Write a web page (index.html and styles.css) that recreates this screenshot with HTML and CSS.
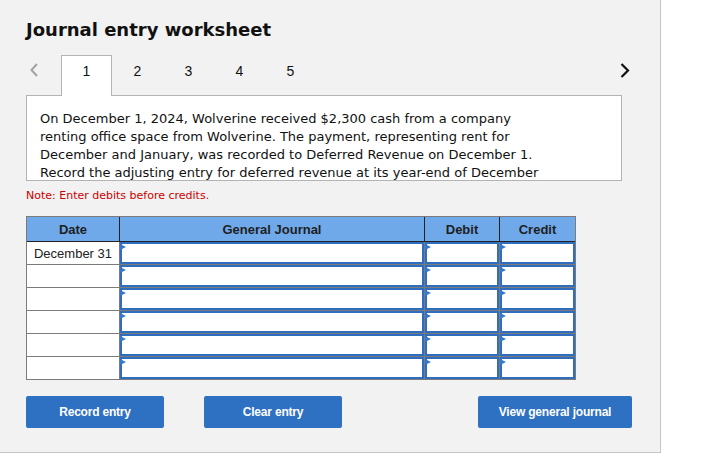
FILE: index.html
```html
<!DOCTYPE html>
<html lang="en">
<head>
<meta charset="utf-8">
<title>Journal entry worksheet</title>
<link rel="stylesheet" href="styles.css">
</head>
<body>
<div class="panel">
  <h1 class="title">Journal entry worksheet</h1>

  <div class="tabs">
    <span class="chev chev-left">
      <svg width="8" height="14" viewBox="0 0 8 14"><polyline points="7,1 1.5,7 7,13" fill="none" stroke="#a3a3a3" stroke-width="2"/></svg>
    </span>
    <span class="tab active">1</span>
    <span class="tab">2</span>
    <span class="tab">3</span>
    <span class="tab">4</span>
    <span class="tab">5</span>
    <span class="chev chev-right">
      <svg width="10" height="15" viewBox="0 0 10 15"><polyline points="1.5,1 8,7.5 1.5,14" fill="none" stroke="#111" stroke-width="2.2"/></svg>
    </span>
  </div>

  <div class="prompt">
    On December 1, 2024, Wolverine received $2,300 cash from a company<br>
    renting office space from Wolverine. The payment, representing rent for<br>
    December and January, was recorded to Deferred Revenue on December 1.<br>
    Record the adjusting entry for deferred revenue at its year-end of December
  </div>

  <p class="note">Note: Enter debits before credits.</p>

  <div class="jtable">
    <div class="th">Date</div>
    <div class="th">General Journal</div>
    <div class="th">Debit</div>
    <div class="th last">Credit</div>

    <div class="td date">December 31</div>
    <div class="td"><div class="inp"></div></div>
    <div class="td"><div class="inp"></div></div>
    <div class="td"><div class="inp"></div></div>

    <div class="td date"></div>
    <div class="td"><div class="inp"></div></div>
    <div class="td"><div class="inp"></div></div>
    <div class="td"><div class="inp"></div></div>

    <div class="td date"></div>
    <div class="td"><div class="inp"></div></div>
    <div class="td"><div class="inp"></div></div>
    <div class="td"><div class="inp"></div></div>

    <div class="td date"></div>
    <div class="td"><div class="inp"></div></div>
    <div class="td"><div class="inp"></div></div>
    <div class="td"><div class="inp"></div></div>

    <div class="td date"></div>
    <div class="td"><div class="inp"></div></div>
    <div class="td"><div class="inp"></div></div>
    <div class="td"><div class="inp"></div></div>

    <div class="td date"></div>
    <div class="td"><div class="inp"></div></div>
    <div class="td"><div class="inp"></div></div>
    <div class="td"><div class="inp"></div></div>
  </div>

  <div class="actions">
    <button class="btn">Record entry</button>
    <button class="btn">Clear entry</button>
    <button class="btn wide">View general journal</button>
  </div>
</div>
</body>
</html>
```

FILE: styles.css
```css
html, body {
  margin: 0;
  padding: 0;
  background: #ffffff;
}

.panel {
  box-sizing: border-box;
  width: 661px;
  height: 453px;
  background: #f2f2f2;
  border-right: 1px solid #c6c6c6;
  border-bottom: 1px solid #c6c6c6;
  padding: 19px 0 0 26px;
}

.title {
  margin: 0;
  font-family: "DejaVu Sans", Verdana, sans-serif;
  font-weight: bold;
  font-size: 18px;
  line-height: 22px;
  color: #111;
}

.tabs {
  display: flex;
  align-items: flex-start;
  width: 604px;
  height: 40px;
  margin-top: 14px;
  font-family: "Liberation Sans", Arial, sans-serif;
  font-size: 14px;
  color: #111;
}

.chev {
  display: flex;
}

.chev-left {
  width: 35px;
  padding: 8px 0 0 4px;
  box-sizing: border-box;
}

.chev-right {
  margin-left: auto;
  padding-top: 8px;
}

.tab {
  box-sizing: border-box;
  width: 51px;
  height: 41px;
  padding-top: 8px;
  line-height: 16px;
  text-align: center;
}

.tab.active {
  position: relative;
  z-index: 1;
  background: #ffffff;
  border: 1px solid #b4b4b4;
  border-bottom: none;
  padding-top: 7px;
}

.prompt {
  box-sizing: border-box;
  width: 596px;
  height: 86px;
  overflow: hidden;
  background: #ffffff;
  border: 1px solid #b4b4b4;
  padding: 14px 0 0 13px;
  font-family: "DejaVu Sans", Verdana, sans-serif;
  font-size: 13px;
  line-height: 18px;
  color: #111;
}

.note {
  margin: 8px 0 0 0;
  font-family: "DejaVu Sans", Verdana, sans-serif;
  font-size: 11px;
  line-height: 13px;
  color: #cc0000;
}

.jtable {
  display: grid;
  grid-template-columns: 92px 304px 74px 75px;
  grid-template-rows: 24px repeat(6, 22px);
  gap: 1px;
  padding: 1px;
  width: max-content;
  margin-top: 14px;
  background: #7b7b7b;
  font-family: "Liberation Sans", Arial, sans-serif;
}

.th {
  background: #70a9e9;
  font-weight: bold;
  font-size: 13px;
  line-height: 25px;
  text-align: center;
  color: #1e1e1e;
  box-shadow: 1px 0 0 #222, 0 1px 0 #222, 1px 1px 0 #222;
}

.th.last {
  box-shadow: 0 1px 0 #222;
}

.td {
  position: relative;
  background: #ffffff;
}

.td.date {
  font-size: 13px;
  line-height: 23px;
  text-align: center;
  color: #222;
}

.inp {
  box-sizing: border-box;
  height: 100%;
  border: 2px solid #2f6ebf;
}

.inp::before {
  content: "";
  position: absolute;
  left: 0;
  top: 2px;
  border-left: 6px solid #3479d0;
  border-top: 3px solid transparent;
  border-bottom: 3px solid transparent;
}

.actions {
  display: flex;
  gap: 40px;
  width: 606px;
  margin-top: 16px;
}

.btn {
  box-sizing: border-box;
  width: 138px;
  height: 32px;
  padding: 0;
  border: none;
  border-radius: 2px;
  background: #2e70c1;
  color: #ffffff;
  font-family: "Liberation Sans", Arial, sans-serif;
  font-weight: bold;
  font-size: 12px;
  letter-spacing: -0.2px;
}

.btn.wide {
  width: 154px;
  margin-left: auto;
}
```
